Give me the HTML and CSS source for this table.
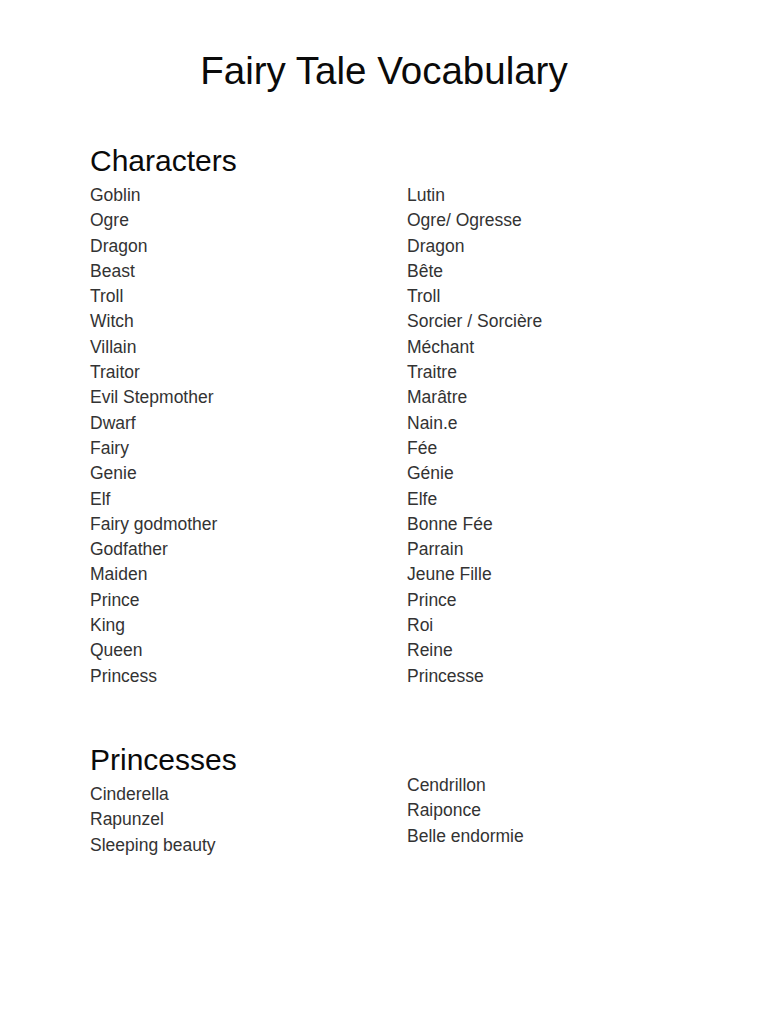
FILE: index.html
```html
<!DOCTYPE html>
<html lang="en">
<head>
<meta charset="utf-8">
<title>Fairy Tale Vocabulary</title>
<link rel="stylesheet" href="styles.css">
</head>
<body>
<main class="page">
  <h1 class="title">Fairy Tale Vocabulary</h1>

  <section class="section">
    <h2 class="heading">Characters</h2>
    <div class="cols">
      <ul class="list">
        <li>Goblin</li><li>Ogre</li><li>Dragon</li><li>Beast</li><li>Troll</li>
        <li>Witch</li><li>Villain</li><li>Traitor</li><li>Evil Stepmother</li><li>Dwarf</li>
        <li>Fairy</li><li>Genie</li><li>Elf</li><li>Fairy godmother</li><li>Godfather</li>
        <li>Maiden</li><li>Prince</li><li>King</li><li>Queen</li><li>Princess</li>
      </ul>
      <ul class="list">
        <li>Lutin</li><li>Ogre/ Ogresse</li><li>Dragon</li><li>Bête</li><li>Troll</li>
        <li>Sorcier / Sorcière</li><li>Méchant</li><li>Traitre</li><li>Marâtre</li><li>Nain.e</li>
        <li>Fée</li><li>Génie</li><li>Elfe</li><li>Bonne Fée</li><li>Parrain</li>
        <li>Jeune Fille</li><li>Prince</li><li>Roi</li><li>Reine</li><li>Princesse</li>
      </ul>
    </div>
  </section>

  <section class="section section-princesses">
    <div class="cols">
      <div>
        <h2 class="heading">Princesses</h2>
        <ul class="list">
          <li>Cinderella</li><li>Rapunzel</li><li>Sleeping beauty</li>
        </ul>
      </div>
      <ul class="list list-raised">
        <li>Cendrillon</li><li>Raiponce</li><li>Belle endormie</li>
      </ul>
    </div>
  </section>
</main>
</body>
</html>
```

FILE: styles.css
```css
html, body {
  margin: 0;
  padding: 0;
  background: #ffffff;
}

.page {
  width: 768px;
  height: 1024px;
  box-sizing: border-box;
  padding: 50px 0 0 90px;
  font-family: "Liberation Sans", Arial, sans-serif;
  color: #333333;
}

.title {
  margin: 0 0 0 -90px;
  font-size: 38.5px;
  font-weight: normal;
  line-height: 42px;
  text-align: center;
  color: #0a0a0a;
}

.section {
  margin-top: 51px;
}

.heading {
  margin: 0 0 4px;
  font-size: 30px;
  font-weight: normal;
  line-height: 36px;
  color: #0a0a0a;
}

.cols {
  display: grid;
  grid-template-columns: 317px 1fr;
}

.list {
  list-style: none;
  margin: 0;
  padding: 0;
  font-size: 17.5px;
  line-height: 25.3px;
}

.section-princesses {
  margin-top: 53px;
}

.list-raised {
  padding-top: 31px;
}
```
